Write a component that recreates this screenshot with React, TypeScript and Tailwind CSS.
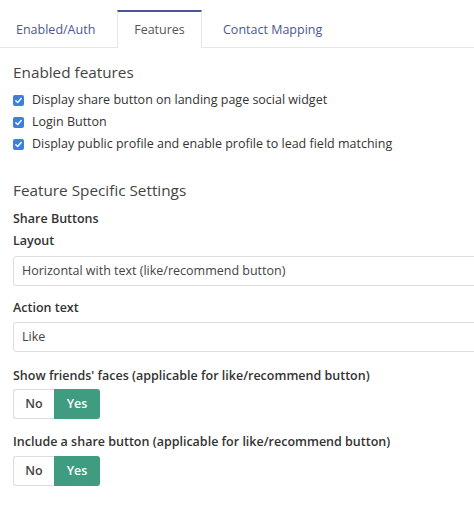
import React from "react";

const font = { fontFamily: '"Open Sans", "Liberation Sans", sans-serif' };

function Check({ label }: { label: string }) {
  return (
    <label className="flex h-[22px] items-center gap-[8px] text-[12.5px] text-[#333]">
      <span className="flex h-[11px] w-[11px] items-center justify-center rounded-[2px] bg-[#3d7fd9]">
        <svg viewBox="0 0 10 10" className="h-[9px] w-[9px]">
          <path d="M2 5.2 L4.1 7.2 L8 2.8" fill="none" stroke="white" strokeWidth="1.6" strokeLinecap="round" strokeLinejoin="round" />
        </svg>
      </span>
      {label}
    </label>
  );
}

function YesNo() {
  return (
    <div className="flex h-[30px] w-[87px] text-[12.5px] font-semibold">
      <span className="flex w-[41px] items-center justify-center rounded-l-[3px] border border-r-0 border-[#ddd] bg-white text-[#444]">
        No
      </span>
      <span className="flex w-[46px] items-center justify-center rounded-r-[3px] bg-[#3f9c80] text-white">
        Yes
      </span>
    </div>
  );
}

export default function App() {
  return (
    <div className="h-[508px] w-[474px] overflow-hidden bg-white" style={font}>
      {/* Tabs */}
      <div className="flex h-12 border-b border-[#e6e6e6] text-[12.5px]">
        <div className="flex w-[117px] items-center pl-4 pt-[14px] text-[#4b5795]">Enabled/Auth</div>
        <div className="-mb-px mt-[10px] flex w-[85px] items-center justify-center border-x border-t-2 border-x-[#e6e6e6] border-t-[#4b5795] bg-white text-[#555]">
          Features
        </div>
        <div className="flex items-center pl-[21px] pt-[14px] text-[#4b5795]">Contact Mapping</div>
      </div>

      <div className="pl-[13px]">
        <h2 className="mt-3 text-[15.3px] leading-6 text-[#444]">Enabled features</h2>
        <div className="mt-[5px]">
          <Check label="Display share button on landing page social widget" />
          <Check label="Login Button" />
          <Check label="Display public profile and enable profile to lead field matching" />
        </div>

        <h2 className="mt-[23px] text-[15.3px] leading-6 text-[#444]">Feature Specific Settings</h2>
        <div className="mt-[7px] text-[12.5px] font-semibold leading-5 text-[#333]">Share Buttons</div>
        <div className="mt-[2px] text-[12.5px] font-semibold leading-5 text-[#333]">Layout</div>
        <div className="mt-[5px] flex h-[30px] w-[480px] items-center rounded-[3px] border border-[#ddd] pl-[8px] text-[12.5px] text-[#444]">
          Horizontal with text (like/recommend button)
        </div>

        <div className="mt-[12px] text-[12.5px] font-semibold leading-5 text-[#333]">Action text</div>
        <div className="mt-1 flex h-[30px] w-[480px] items-center rounded-[3px] border border-[#ddd] pl-[8px] text-[12.5px] text-[#444]">
          Like
        </div>

        <div className="mt-[14px] text-[12.5px] font-semibold leading-5 text-[#333]">
          Show friends' faces (applicable for like/recommend button)
        </div>
        <div className="mt-[3px]">
          <YesNo />
        </div>

        <div className="mt-[13px] text-[12.5px] font-semibold leading-5 text-[#333]">
          Include a share button (applicable for like/recommend button)
        </div>
        <div className="mt-[4px]">
          <YesNo />
        </div>
      </div>
    </div>
  );
}
